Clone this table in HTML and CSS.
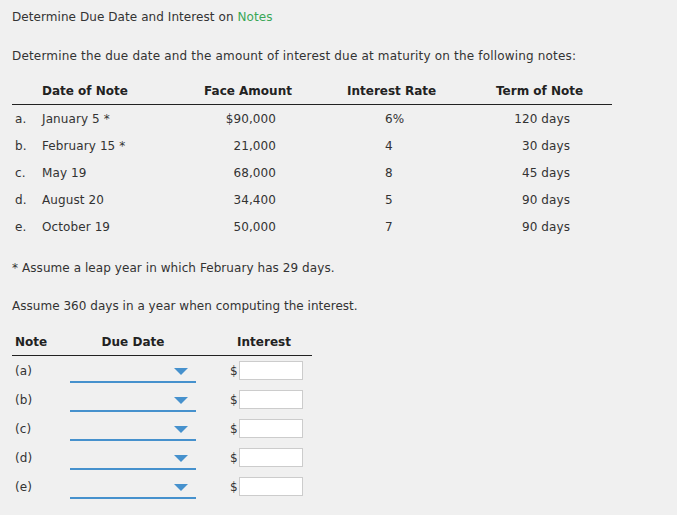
FILE: index.html
```html
<!DOCTYPE html>
<html>
<head>
<meta charset="utf-8">
<link rel="stylesheet" href="styles.css">
</head>
<body>
<div class="page">
  <p class="title">Determine Due Date and Interest on <span class="green">Notes</span></p>
  <p class="intro">Determine the due date and the amount of interest due at maturity on the following notes:</p>

  <table class="notes">
    <colgroup>
      <col style="width:30px"><col style="width:162px"><col style="width:88px"><col style="width:55px"><col style="width:85px"><col style="width:64px"><col style="width:86px"><col style="width:30px">
    </colgroup>
    <thead>
      <tr>
        <th></th><th class="l">Date of Note</th><th>Face Amount</th><th></th><th>Interest Rate</th><th></th><th>Term of Note</th><th></th>
      </tr>
    </thead>
    <tbody>
      <tr><td class="let">a.</td><td>January 5 *</td><td class="amt">$90,000</td><td></td><td class="rate">6%</td><td></td><td class="term">120 days</td><td></td></tr>
      <tr><td class="let">b.</td><td>February 15 *</td><td class="amt">21,000</td><td></td><td class="rate">4</td><td></td><td class="term">30 days</td><td></td></tr>
      <tr><td class="let">c.</td><td>May 19</td><td class="amt">68,000</td><td></td><td class="rate">8</td><td></td><td class="term">45 days</td><td></td></tr>
      <tr><td class="let">d.</td><td>August 20</td><td class="amt">34,400</td><td></td><td class="rate">5</td><td></td><td class="term">90 days</td><td></td></tr>
      <tr><td class="let">e.</td><td>October 19</td><td class="amt">50,000</td><td></td><td class="rate">7</td><td></td><td class="term">90 days</td><td></td></tr>
    </tbody>
  </table>

  <p class="foot">* Assume a leap year in which February has 29 days.</p>
  <p class="assume">Assume 360 days in a year when computing the interest.</p>

  <table class="answers">
    <colgroup>
      <col style="width:58px"><col style="width:126px"><col style="width:20px"><col style="width:96px">
    </colgroup>
    <thead>
      <tr><th class="l">Note</th><th>Due Date</th><th></th><th>Interest</th></tr>
    </thead>
    <tbody>
      <tr><td>(a)</td><td><div class="dd"><span class="tri"></span></div></td><td></td><td><div class="money"><span>$</span><span class="box"></span></div></td></tr>
      <tr><td>(b)</td><td><div class="dd"><span class="tri"></span></div></td><td></td><td><div class="money"><span>$</span><span class="box"></span></div></td></tr>
      <tr><td>(c)</td><td><div class="dd"><span class="tri"></span></div></td><td></td><td><div class="money"><span>$</span><span class="box"></span></div></td></tr>
      <tr><td>(d)</td><td><div class="dd"><span class="tri"></span></div></td><td></td><td><div class="money"><span>$</span><span class="box"></span></div></td></tr>
      <tr><td>(e)</td><td><div class="dd"><span class="tri"></span></div></td><td></td><td><div class="money"><span>$</span><span class="box"></span></div></td></tr>
    </tbody>
  </table>
</div>
</body>
</html>
```

FILE: styles.css
```css
html, body {
  margin: 0;
  padding: 0;
  background: #f0f0f0;
}
body {
  font-family: Verdana, "DejaVu Sans", sans-serif;
  font-size: 12px;
  color: #333;
}
.page {
  padding: 9px 12px 0 12px;
}
p {
  margin: 0;
  line-height: 16px;
}
.title {
  letter-spacing: 0.07px;
}
.green {
  color: #3aa757;
}
.intro {
  margin-top: 23px;
  letter-spacing: 0.18px;
}
table {
  border-collapse: collapse;
  table-layout: fixed;
}
th {
  font-weight: bold;
  color: #222;
  padding: 0;
  height: 27px;
  vertical-align: middle;
  text-align: center;
  border-bottom: 1px solid #222;
  white-space: nowrap;
}
th.l {
  text-align: left;
}
td {
  padding: 0;
  vertical-align: middle;
  white-space: nowrap;
  letter-spacing: 0.1px;
}
.notes {
  width: 600px;
  margin-top: 13px;
}
.notes td {
  height: 27px;
}
.notes .let {
  padding-left: 3px;
}
.notes .amt {
  text-align: right;
  padding-right: 16px;
}
.notes .rate {
  padding-left: 38px;
}
.notes .term {
  text-align: right;
  padding-right: 12px;
}
.foot {
  margin-top: 20px;
  letter-spacing: 0.07px;
}
.assume {
  margin-top: 22px;
  letter-spacing: 0.03px;
}
.answers {
  width: 300px;
  margin-top: 15px;
}
.answers th {
  height: 26px;
}
.answers th.l {
  padding-left: 3px;
}
.answers td {
  height: 29px;
}
.answers td:first-child {
  padding-left: 3px;
}
.dd {
  position: relative;
  height: 18px;
  margin-top: 4px;
  border-bottom: 2px solid #4691cd;
}
.tri {
  position: absolute;
  right: 8px;
  top: 5px;
  width: 0;
  height: 0;
  border-left: 7px solid transparent;
  border-right: 7px solid transparent;
  border-top: 7px solid #4691cd;
}
.money {
  display: flex;
  align-items: center;
  padding-left: 14px;
}
.box {
  display: block;
  width: 62px;
  height: 17px;
  background: #fff;
  border: 1px solid #ccc;
  margin-left: 1px;
}
```
